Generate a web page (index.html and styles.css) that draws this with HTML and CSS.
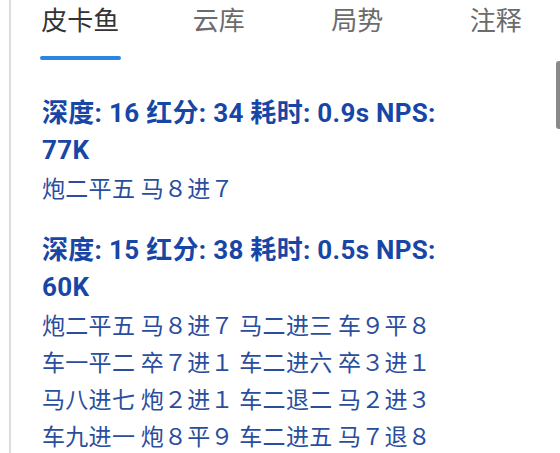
FILE: index.html
```
<!DOCTYPE html>
<html lang="zh">
<head>
<meta charset="utf-8">
<link rel="stylesheet" href="styles.css">
</head>
<body>
<div class="panel">
  <div class="tabs">
    <div class="tab active"><span class="label">皮卡鱼</span><span class="indicator"></span></div>
    <div class="tab"><span class="label">云库</span></div>
    <div class="tab"><span class="label">局势</span></div>
    <div class="tab"><span class="label">注释</span></div>
  </div>
  <div class="content">
    <div class="entry">
      <div class="head">深度: 16 红分: 34 耗时: 0.9s NPS: 77K</div>
      <div class="moves">炮二平五 马８进７</div>
    </div>
    <div class="entry">
      <div class="head">深度: 15 红分: 38 耗时: 0.5s NPS: 60K</div>
      <div class="moves">炮二平五 马８进７ 马二进三 车９平８ 车一平二 卒７进１ 车二进六 卒３进１ 马八进七 炮２进１ 车二退二 马２进３ 车九进一 炮８平９ 车二进五 马７退８</div>
    </div>
  </div>
</div>
<div class="scrollbar"></div>
</body>
</html>
```
FILE: styles.css
```
html, body {
  margin: 0;
  padding: 0;
  background: #ffffff;
  overflow: hidden;
  width: 560px;
  height: 453px;
}
body {
  position: relative;
  font-family: Roboto, "Noto Sans CJK SC", sans-serif;
}
.panel {
  margin-left: 9px;
  border-left: 2px solid #dcdcdc;
  height: 453px;
  box-sizing: border-box;
  overflow: hidden;
}
.tabs {
  display: grid;
  grid-template-columns: repeat(4, 138.5px);
  height: 62px;
}
.tab {
  display: flex;
  flex-direction: column;
  align-items: center;
}
.label {
  font-size: 26px;
  line-height: 38px;
  color: #6b6b6b;
  font-family: "Noto Sans CJK SC", sans-serif;
  white-space: nowrap;
}
.tab.active .label {
  color: #333333;
}
.indicator {
  margin-top: 18px;
  width: 81px;
  height: 4px;
  border-radius: 2px;
  background: #2b86e2;
}
.content {
  padding: 33px 0 0 31px;
  width: 440px;
  display: flex;
  flex-direction: column;
  gap: 26px;
}
.head {
  font-weight: bold;
  font-size: 26px;
  line-height: 37px;
  letter-spacing: 0.3px;
  color: #1846a6;
  font-family: Roboto, "Noto Sans CJK SC", sans-serif;
}
.moves {
  font-size: 23px;
  line-height: 37px;
  letter-spacing: 0.3px;
  color: #2a4d9e;
  font-family: "Noto Sans CJK SC", sans-serif;
  word-break: keep-all;
}
.scrollbar {
  position: absolute;
  left: 556px;
  top: 61px;
  width: 6px;
  height: 68px;
  border-radius: 3px;
  background: #8a8a8a;
}
```
